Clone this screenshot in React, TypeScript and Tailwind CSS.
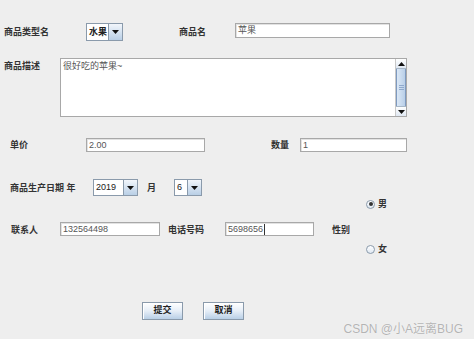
import React from "react";

const FONT = "font-['Liberation_Sans','Noto_Sans_CJK_SC',sans-serif]";

function Label({ text, className = "" }: { text: string; className?: string }) {
  return (
    <span className={`shrink-0 whitespace-nowrap text-[9px] font-bold leading-[14px] text-[#333333] ${className}`}>
      {text}
    </span>
  );
}

function Field({ value, className = "", caret = false }: { value: string; className?: string; caret?: boolean }) {
  return (
    <div
      className={`flex shrink-0 items-center border border-[#a8a8a8] bg-white pl-[2px] text-[9px] leading-none text-[#555555] shadow-[inset_1px_1px_0_#e2e2e2] ${className}`}
    >
      {value}
      {caret && <span className="ml-px h-[11px] w-px bg-[#333333]" />}
    </div>
  );
}

function Arrow({ up = false }: { up?: boolean }) {
  return (
    <svg width="7" height="4" viewBox="0 0 7 4" className={up ? "rotate-180" : ""}>
      <path d="M0 0h7L3.5 4z" fill="#111111" />
    </svg>
  );
}

function Combo({ value, className = "", bold = false }: { value: string; className?: string; bold?: boolean }) {
  return (
    <div className={`flex shrink-0 border border-[#8a9aab] bg-white ${className}`}>
      <div
        className={`flex flex-1 items-center pl-[2px] text-[9px] leading-none text-[#222222] ${bold ? "font-bold" : ""}`}
      >
        {value}
      </div>
      <div className="flex w-[14px] items-center justify-center border-l border-[#8a9aab] bg-gradient-to-b from-[#f2f6fb] to-[#b9cfe6]">
        <Arrow />
      </div>
    </div>
  );
}

function Radio({ text, checked = false }: { text: string; checked?: boolean }) {
  return (
    <div className="flex h-[14px] items-center gap-[3px]">
      <span className="flex h-[9px] w-[9px] items-center justify-center rounded-full border border-[#8a9aab] bg-gradient-to-b from-white to-[#dfe8f2]">
        {checked && <span className="h-[4px] w-[4px] rounded-full bg-[#333333]" />}
      </span>
      <Label text={text} />
    </div>
  );
}

function Button({ text }: { text: string }) {
  return (
    <div className="flex h-[18px] w-[41px] items-center justify-center border border-[#8a9aab] bg-gradient-to-b from-white via-[#e6eef7] to-[#b9cfe6] text-[9px] font-bold text-[#222222] shadow-[inset_1px_1px_0_#ffffff]">
      {text}
    </div>
  );
}

export default function App() {
  return (
    <div className={`relative h-[339px] w-[474px] overflow-hidden bg-[#eeeeee] ${FONT}`}>
      <div className="flex flex-col pt-[23px]">
        <div className="flex h-[18px] items-center pl-[4px]">
          <Label text="商品类型名" className="w-[82px]" />
          <Combo value="水果" bold className="h-[18px] w-[37px]" />
          <Label text="商品名" className="ml-[56px] w-[56px]" />
          <Field value="苹果" className="h-[15px] w-[155px] self-start" />
        </div>

        <div className="mt-[17px] flex items-start pl-[4px]">
          <Label text="商品描述" className="mt-[1px] w-[56px]" />
          <div className="flex h-[59px] w-[347px] border border-[#a8a8a8] bg-white">
            <div className="flex-1 pl-[2px] pt-[3px] text-[9px] leading-none text-[#555555]">很好吃的苹果~</div>
            <div className="flex w-[11px] flex-col border-l border-[#c8c8c8] bg-[#f2f2f2]">
              <div className="flex h-[10px] items-center justify-center border-b border-[#a8b8c8] bg-gradient-to-b from-white to-[#dfe8f2]">
                <Arrow up />
              </div>
              <div className="flex flex-1 flex-col items-center justify-center gap-px border-x border-[#7e9ac0] bg-gradient-to-r from-[#dbe8f6] to-[#b9cfe8]">
                <span className="h-px w-[5px] bg-[#8fa9cc]" />
                <span className="h-px w-[5px] bg-[#8fa9cc]" />
                <span className="h-px w-[5px] bg-[#8fa9cc]" />
              </div>
              <div className="flex h-[10px] items-center justify-center border-t border-[#a8b8c8] bg-gradient-to-b from-white to-[#dfe8f2]">
                <Arrow />
              </div>
            </div>
          </div>
        </div>

        <div className="mt-[21px] flex h-[14px] items-center pl-[10px]">
          <Label text="单价" className="w-[76px]" />
          <Field value="2.00" className="h-[14px] w-[119px]" />
          <Label text="数量" className="ml-[66px] w-[29px]" />
          <Field value="1" className="h-[14px] w-[107px]" />
        </div>

        <div className="mt-[27px] flex h-[17px] items-center pl-[10px]">
          <Label text="商品生产日期 年" className="w-[83px]" />
          <Combo value="2019" className="h-[17px] w-[45px]" />
          <Label text="月" className="ml-[9px] w-[27px]" />
          <Combo value="6" className="h-[17px] w-[28px]" />
        </div>

        <div className="flex h-[65px] items-start pl-[11px]">
          <Label text="联系人" className="mt-[27px] w-[49px]" />
          <Field value="132564498" className="mt-[26px] h-[14px] w-[100px]" />
          <Label text="电话号码" className="ml-[8px] mt-[27px] w-[57px]" />
          <Field value="5698656" caret className="mt-[26px] h-[14px] w-[89px]" />
          <Label text="性别" className="ml-[18px] mt-[27px] w-[34px]" />
          <div className="mt-[1px] flex flex-col gap-[31px]">
            <Radio text="男" checked />
            <Radio text="女" />
          </div>
        </div>

        <div className="mt-[41px] flex gap-[20px] pl-[142px]">
          <Button text="提交" />
          <Button text="取消" />
        </div>
      </div>

      <div className="absolute bottom-[4px] right-[11px] text-[12px] leading-none text-[#b4b4b4] [text-shadow:0_0_1px_#ffffff]">
        CSDN @小A远离BUG
      </div>
    </div>
  );
}
